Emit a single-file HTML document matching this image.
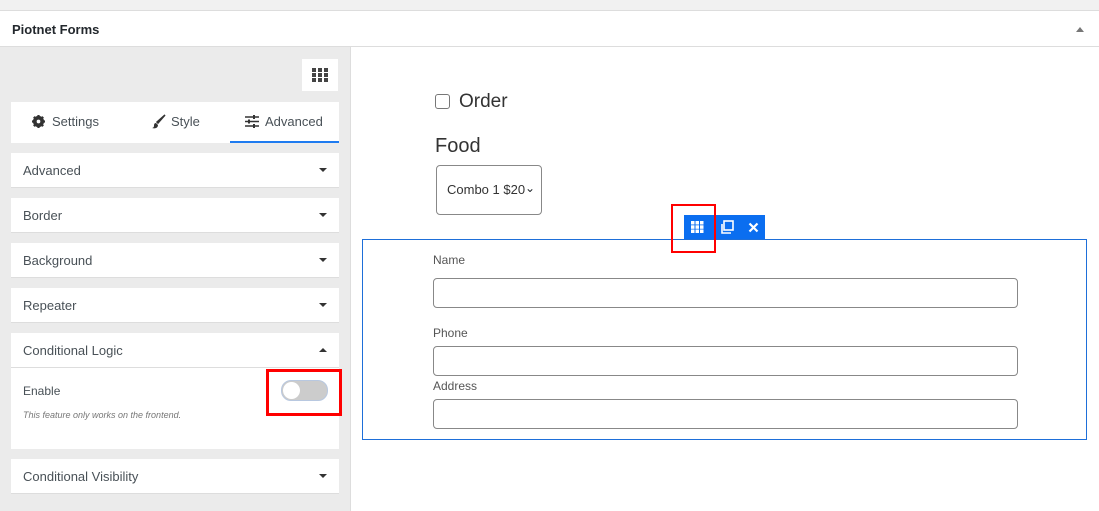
<!DOCTYPE html><html><head><style>
body{margin:0;width:1099px;height:511px;background:#f1f1f1;font-family:"Liberation Sans",sans-serif;position:relative;overflow:hidden;color:#23282d}
.a{position:absolute}
.hdr{left:0;top:10px;width:1099px;height:35px;background:#fff;border-top:1px solid #ddd;border-bottom:1px solid #ddd}
.left{left:0;top:47px;width:350px;height:464px;background:#ebebeb;border-right:1px solid #ddd}
.right{left:351px;top:47px;width:748px;height:464px;background:#fff}
.sec{left:11px;width:328px;height:34px;background:#fff;font-size:13px;color:#495157;box-shadow:0 1px 0 #ddd}
.sec span{position:absolute;left:12px;top:10px}
.car{position:absolute;right:12px;top:15px;width:0;height:0;border-left:4px solid transparent;border-right:4px solid transparent;border-top:4px solid #333}
.up{border-top:none;border-bottom:4px solid #333}
.inp{left:433px;width:583px;height:28px;border:1px solid #888;border-radius:4px;background:#fff}
.lbl{left:433px;font-size:12px;color:#555}
</style></head><body>
<div class="a hdr"><span class="a" style="left:12px;top:11px;font-size:13px;font-weight:bold;color:#23282d">Piotnet Forms</span>
<div class="a" style="right:15px;top:16px;border-left:4px solid transparent;border-right:4px solid transparent;border-bottom:5px solid #777"></div></div>
<div class="a left"></div>
<div class="a right"></div>
<div class="a" style="left:302px;top:59px;width:36px;height:32px;background:#fff"></div>
<svg class="a" style="left:312px;top:68px" width="16" height="14"><g fill="#444"><rect x="0" y="0" width="4" height="4"/><rect x="6" y="0" width="4" height="4"/><rect x="12" y="0" width="4" height="4"/><rect x="0" y="5" width="4" height="4"/><rect x="6" y="5" width="4" height="4"/><rect x="12" y="5" width="4" height="4"/><rect x="0" y="10" width="4" height="4"/><rect x="6" y="10" width="4" height="4"/><rect x="12" y="10" width="4" height="4"/></g></svg>
<div class="a" style="left:11px;top:102px;width:328px;height:41px;background:#fff;font-size:13px;color:#495157">
<svg class="a" style="left:21px;top:13px" width="13" height="13" viewBox="0 0 14 14"><circle cx="7" cy="7" r="4.5" fill="none" stroke="#333" stroke-width="3"/><g stroke="#333" stroke-width="2.4"><path d="M7 0v14M0 7h14M2 2l10 10M12 2l-10 10"/></g><circle cx="7" cy="7" r="2" fill="#fff"/></svg>
<span class="a" style="left:41px;top:12px">Settings</span>
<svg class="a" style="left:140px;top:12px" width="15" height="15" viewBox="0 0 15 15"><path d="M14 1L7 9l-1-1z" fill="#333" stroke="#333" stroke-width="1.5"/><path d="M5 9c-2 0-2 2-2 3s-1 2-2 2c3 1 6 0 6-3z" fill="#333"/></svg>
<span class="a" style="left:160px;top:12px">Style</span>
<svg class="a" style="left:234px;top:13px" width="14" height="13"><g stroke="#333" stroke-width="1.5"><path d="M0 2h14M0 6.5h14M0 11h14"/></g><g fill="#333"><rect x="8" y="0" width="2" height="4"/><rect x="3" y="4.5" width="2" height="4"/><rect x="8" y="9" width="2" height="4"/></g></svg>
<span class="a" style="left:254px;top:12px">Advanced</span>
<div class="a" style="left:219px;top:39px;width:109px;height:2px;background:#1e7bf0"></div></div>
<div class="a sec" style="top:153px"><span>Advanced</span><i class="car"></i></div>
<div class="a sec" style="top:198px"><span>Border</span><i class="car"></i></div>
<div class="a sec" style="top:243px"><span>Background</span><i class="car"></i></div>
<div class="a sec" style="top:288px"><span>Repeater</span><i class="car"></i></div>
<div class="a sec" style="top:333px"><span>Conditional Logic</span><i class="car up"></i></div>
<div class="a" style="left:11px;top:367px;width:328px;height:81px;background:#fff;border-top:1px solid #ddd">
<span class="a" style="left:12px;top:16px;font-size:12px;color:#495157">Enable</span>
<span class="a" style="left:12px;top:42px;font-size:9px;font-style:italic;color:#777">This feature only works on the frontend.</span></div>
<div class="a" style="left:281px;top:380px;width:45px;height:19px;border-radius:10px;background:#ccc;border:1px solid #b8c8e0"></div>
<div class="a" style="left:283px;top:382px;width:17px;height:17px;border-radius:50%;background:#fff"></div>
<div class="a" style="left:266px;top:369px;width:70px;height:41px;border:3px solid #f00"></div>
<div class="a sec" style="top:459px"><span>Conditional Visibility</span><i class="car"></i></div>

<div class="a" style="left:435px;top:94px;width:13px;height:13px;border:1px solid #777;border-radius:3px"></div>
<span class="a" style="left:459px;top:91px;font-size:19px;color:#333">Order</span>
<span class="a" style="left:435px;top:135px;font-size:20px;color:#333">Food</span>
<div class="a" style="left:436px;top:165px;width:104px;height:48px;border:1px solid #888;border-radius:4px"><span class="a" style="left:10px;top:16px;font-size:13px;color:#333">Combo 1 $20</span><span class="a" style="left:88px;top:15px;font-size:12px">⌄</span></div>
<div class="a" style="left:362px;top:239px;width:723px;height:199px;border:1px solid #1e6fd9"></div>
<div class="a" style="left:684px;top:215px;width:81px;height:24px;background:#0b6ef0"></div>
<svg class="a" style="left:691px;top:221px" width="13" height="12"><g fill="#fff"><rect x="0" y="0" width="3.5" height="3.5"/><rect x="4.5" y="0" width="3.5" height="3.5"/><rect x="9" y="0" width="3.5" height="3.5"/><rect x="0" y="4.3" width="3.5" height="3.5"/><rect x="4.5" y="4.3" width="3.5" height="3.5"/><rect x="9" y="4.3" width="3.5" height="3.5"/><rect x="0" y="8.5" width="3.5" height="3.5"/><rect x="4.5" y="8.5" width="3.5" height="3.5"/><rect x="9" y="8.5" width="3.5" height="3.5"/></g></svg>
<svg class="a" style="left:720px;top:220px" width="14" height="14"><rect x="4" y="1" width="9" height="9" fill="none" stroke="#fff" stroke-width="1.6"/><path d="M2 4v9h9" fill="none" stroke="#fff" stroke-width="1.6"/></svg>
<svg class="a" style="left:748px;top:222px" width="11" height="11"><path d="M1.5 1.5l8 8M9.5 1.5l-8 8" stroke="#fff" stroke-width="2.2"/></svg>
<div class="a" style="left:671px;top:204px;width:41px;height:45px;border:2px solid #f00"></div>
<span class="a lbl" style="top:253px">Name</span>
<div class="a inp" style="top:278px"></div>
<span class="a lbl" style="top:326px">Phone</span>
<div class="a inp" style="top:346px"></div>
<span class="a lbl" style="top:379px">Address</span>
<div class="a inp" style="top:399px"></div>
</body></html>
